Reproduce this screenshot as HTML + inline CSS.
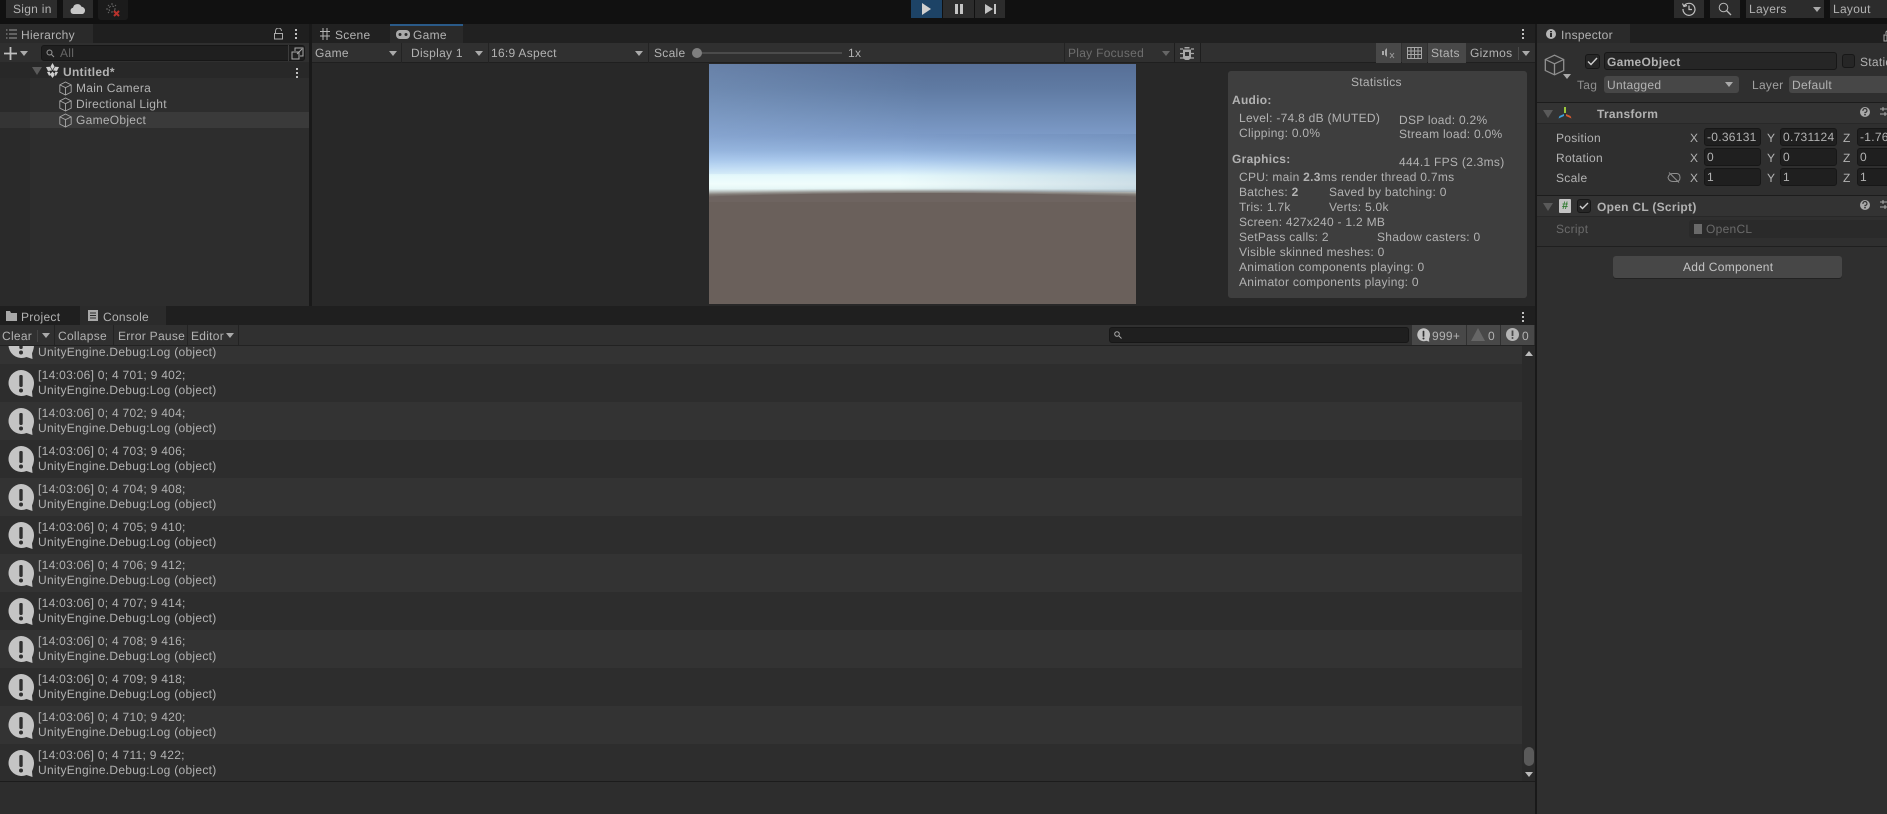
<!DOCTYPE html>
<html><head><meta charset="utf-8"><title>Unity</title>
<style>
html,body{margin:0;padding:0;background:#191919}
body{width:1887px;height:814px;overflow:hidden;position:relative}
div,span.t,svg{position:absolute}
.t{position:absolute;white-space:pre;font:12px/16px "Liberation Sans",sans-serif;letter-spacing:.28px;color:#b2b2b2;text-rendering:geometricPrecision}
.b{font-weight:700}
.d{color:#7d7d7d}
.s{color:#c4c4c4}
b{font-weight:700}
.f{background:#1f1f1f;border:1px solid #171717;box-sizing:border-box;border-radius:3px}
.v{width:1px;background:#232323}
.tb{border-left:4px solid transparent;border-right:4px solid transparent;border-top:5px solid #aaa;width:0;height:0}
.td{border-left:5px solid transparent;border-right:5px solid transparent;border-top:8px solid #5a5a5a;width:0;height:0}
.l{height:1px;background:#1c1c1c}
.r{left:0;width:1522px;height:38px}
.r1{background:#2d2d2d}.r2{background:#333}
</style></head><body>
<svg width="0" height="0" style="position:absolute"><defs>
<symbol id="cube" viewBox="0 0 16 18"><path d="M8 1 15 4.500V13.500L8 17 1 13.500V4.500ZM1 4.500 8 8 15 4.500M8 8V17" fill="none" stroke="#a8a8a8" stroke-width="1.100"/></symbol>
<symbol id="al" viewBox="0 0 26 27"><path d="M13 0A13 13 0 0 1 26 13C26 17 24.500 20 24 21.500L24.500 27 18.500 25A13 13 0 1 1 13 0Z" fill="#c4c4c4"/><rect x="11.300" y="5" width="3.400" height="12" rx="1.200" fill="#2f2f2f"/><circle cx="13" cy="20.500" r="2" fill="#2f2f2f"/></symbol>
</defs></svg>

<!-- top bar -->
<div style="left:0;top:0;width:1887px;height:24px;background:#111"></div>
<div style="left:6px;top:0;width:51px;height:18px;background:#2c2c2c"></div>
<span class="t" style="left:13px;top:1px">Sign in</span>
<div style="left:63px;top:0;width:30px;height:18px;background:#2c2c2c"></div>
<svg style="left:70px;top:4px" width="16" height="10" viewBox="0 0 16 10"><path d="M3.500 10A3.200 3.200 0 0 1 3 3.700 4.500 4.500 0 0 1 11.500 2.800 3.700 3.700 0 0 1 12.500 10Z" fill="#c8c8c8"/></svg>
<div style="left:98px;top:0;width:30px;height:20px;background:#1b1b1b;border-radius:0 0 3px 3px"></div>
<svg style="left:106px;top:3px" width="15" height="14" viewBox="0 0 15 14"><circle cx="6" cy="6" r="3" fill="none" stroke="#666" stroke-dasharray="2 1.500"/><path d="M6 0V2M0 6H2M2 2 3 3M10 2 9 3M2 10 3 9" stroke="#666"/><path d="M8 8 13 13M13 8 8 13" stroke="#b8322c" stroke-width="2"/></svg>

<div style="left:911px;top:0;width:31px;height:18px;background:#1d4366"></div>
<svg style="left:921px;top:3px" width="12" height="12" viewBox="0 0 12 12"><path d="M1 0 10 6 1 12Z" fill="#d0d0d0"/></svg>
<div style="left:943px;top:0;width:31px;height:18px;background:#2c2c2c"></div>
<div style="left:955px;top:4px;width:3px;height:10px;background:#c4c4c4"></div><div style="left:960px;top:4px;width:3px;height:10px;background:#c4c4c4"></div>
<div style="left:975px;top:0;width:30px;height:18px;background:#2c2c2c"></div>
<svg style="left:985px;top:4px" width="12" height="10" viewBox="0 0 12 10"><path d="M0 0 8 5 0 10ZM9 0H11V10H9Z" fill="#c4c4c4"/></svg>

<div style="left:1674px;top:0;width:30px;height:18px;background:#2c2c2c"></div>
<svg style="left:1682px;top:2px" width="14" height="14" viewBox="0 0 14 14"><path d="M2 4A6 6 0 1 1 1 7M7 3.500V7.500H10M0.500 1.500 2 4.500 5 3.500" fill="none" stroke="#c0c0c0" stroke-width="1.200"/></svg>
<div style="left:1710px;top:0;width:30px;height:18px;background:#2c2c2c"></div>
<svg style="left:1718px;top:2px" width="14" height="14" viewBox="0 0 14 14"><circle cx="5.500" cy="5.500" r="4.300" fill="none" stroke="#b8b8b8" stroke-width="1"/><path d="M8.500 8.500 13 13" stroke="#b8b8b8" stroke-width="1.300"/></svg>
<div style="left:1746px;top:0;width:78px;height:18px;background:#2c2c2c"></div>
<span class="t" style="left:1749px;top:1px">Layers</span><div class="tb" style="left:1813px;top:7px"></div>
<div style="left:1830px;top:0;width:57px;height:18px;background:#2c2c2c"></div>
<span class="t" style="left:1833px;top:1px">Layout</span>

<!-- Hierarchy -->
<div style="left:0;top:24px;width:309px;height:282px;background:#2d2d2d"></div>
<div style="left:0;top:24px;width:309px;height:19px;background:#1f1f1f"></div>
<div style="left:0;top:24px;width:93px;height:19px;background:#2a2a2a"></div>
<svg style="left:6px;top:29px" width="11" height="10" viewBox="0 0 11 10"><path d="M3 1H11M3 5H11M3 9H11" stroke="#999"/><path d="M0 1H1.500M0 5H1.500M0 9H1.500" stroke="#999"/></svg>
<span class="t" style="left:21px;top:27px">Hierarchy</span>
<svg style="left:273px;top:28px" width="11" height="12" viewBox="0 0 11 12"><path d="M2.500 5V3A3 3 0 0 1 8.500 3M1.500 5.500H9.500V11H1.500Z" fill="none" stroke="#aaa"/></svg>
<div style="left:295px;top:29px;width:2px;height:2px;background:#c0c0c0"></div><div style="left:295px;top:33px;width:2px;height:2px;background:#c0c0c0"></div><div style="left:295px;top:37px;width:2px;height:2px;background:#c0c0c0"></div>
<div style="left:0;top:43px;width:309px;height:19px;background:#2f2f2f"></div>
<svg style="left:4px;top:47px" width="13" height="13" viewBox="0 0 13 13"><path d="M6.500 0V13M0 6.500H13" stroke="#c0c0c0" stroke-width="1.800"/></svg>
<div class="tb" style="left:20px;top:51px"></div>
<div class="f" style="left:41px;top:45px;width:264px;height:16px"></div>
<svg style="left:46px;top:49px" width="9" height="9" viewBox="0 0 9 9"><circle cx="3.500" cy="3.500" r="2.500" fill="none" stroke="#999"/><path d="M5.500 5.500 8 8" stroke="#999"/></svg>
<span class="t d" style="left:60px;top:45px;color:#666">All</span>
<div style="left:288px;top:45px;width:1px;height:16px;background:#3c3c3c"></div>
<svg style="left:291px;top:47px" width="13" height="13" viewBox="0 0 13 13"><path d="M4 4V1H12V9H9M1 5H8V12H1ZM6 7 11 2" fill="none" stroke="#a8a8a8"/></svg>
<div style="left:0;top:62px;width:309px;height:16px;background:#282828"></div>
<div style="left:0;top:78px;width:30px;height:228px;background:#2a2a2a"></div>
<div style="left:30px;top:112px;width:279px;height:16px;background:#3a3a3a"></div>
<div style="left:0;top:112px;width:30px;height:16px;background:#343434"></div>
<div class="td" style="left:32px;top:67px"></div>
<svg style="left:46px;top:63px" width="13" height="15" viewBox="0 0 13 15"><path d="M6.500 0 8.500 3.500 6.500 7 4.500 3.500ZM0 4 4 3.800 6 7.500 2 8ZM13 4 9 3.800 7 7.500 11 8ZM6.500 8.500 9 11.500 6.500 15 4 11.500ZM1 9 3.500 8.500 5 12 3 12.800ZM12 9 9.500 8.500 8 12 10 12.800Z" fill="#d0d0d0"/></svg>
<span class="t b" style="left:63px;top:64px">Untitled*</span>
<div style="left:296px;top:68px;width:2px;height:2px;background:#c0c0c0"></div><div style="left:296px;top:72px;width:2px;height:2px;background:#c0c0c0"></div><div style="left:296px;top:76px;width:2px;height:2px;background:#c0c0c0"></div>
<svg style="left:59px;top:81px" width="13" height="15"><use href="#cube"/></svg>
<span class="t" style="left:76px;top:80px">Main Camera</span>
<svg style="left:59px;top:97px" width="13" height="15"><use href="#cube"/></svg>
<span class="t" style="left:76px;top:96px">Directional Light</span>
<svg style="left:59px;top:113px" width="13" height="15"><use href="#cube"/></svg>
<span class="t" style="left:76px;top:112px">GameObject</span>

<!-- Game panel -->
<div style="left:312px;top:24px;width:1223px;height:282px;background:#282828"></div>
<div style="left:312px;top:24px;width:1223px;height:19px;background:#212121"></div>
<svg style="left:320px;top:28px" width="10" height="12" viewBox="0 0 10 12"><path d="M3 0V12M7 0V12M0 3.500H10M0 8H10" stroke="#b5b5b5"/></svg>
<span class="t" style="left:335px;top:27px">Scene</span>
<div style="left:390px;top:24px;width:73px;height:19px;background:#2a2a2a"></div>
<div style="left:390px;top:24px;width:73px;height:2px;background:#2a5a88"></div>
<svg style="left:396px;top:30px" width="14" height="9" viewBox="0 0 14 9"><rect x="0" y="0" width="14" height="9" rx="4" fill="#aaa"/><circle cx="4" cy="4.500" r="1.500" fill="#2a2a2a"/><circle cx="10" cy="4.500" r="1.500" fill="#2a2a2a"/></svg>
<span class="t" style="left:413px;top:27px">Game</span>
<div style="left:1522px;top:29px;width:2px;height:2px;background:#c0c0c0"></div><div style="left:1522px;top:33px;width:2px;height:2px;background:#c0c0c0"></div><div style="left:1522px;top:37px;width:2px;height:2px;background:#c0c0c0"></div>
<div style="left:312px;top:43px;width:1223px;height:20px;background:#303030"></div>
<div style="left:312px;top:62px;width:1223px;height:1px;background:#1f1f1f"></div>
<span class="t" style="left:315px;top:45px">Game</span><div class="tb" style="left:389px;top:51px"></div><div class="v" style="left:401px;top:43px;height:20px"></div>
<span class="t" style="left:411px;top:45px">Display 1</span><div class="tb" style="left:475px;top:51px"></div><div class="v" style="left:488px;top:43px;height:20px"></div>
<span class="t" style="left:491px;top:45px">16:9 Aspect</span><div class="tb" style="left:635px;top:51px"></div><div class="v" style="left:648px;top:43px;height:20px"></div>
<span class="t" style="left:654px;top:45px">Scale</span>
<div style="left:697px;top:52px;width:145px;height:2px;background:#4b4b4b"></div>
<div style="left:692px;top:48px;width:10px;height:10px;border-radius:50%;background:#7f7f7f"></div>
<span class="t" style="left:848px;top:45px">1x</span>
<div class="v" style="left:1064px;top:43px;height:20px"></div>
<span class="t d" style="left:1068px;top:45px;color:#6e6e6e">Play Focused</span>
<div class="tb" style="left:1162px;top:51px;border-top-color:#666"></div>
<div class="v" style="left:1174px;top:43px;height:20px;background:#1e1e1e"></div>
<svg style="left:1180px;top:46px" width="14" height="14" viewBox="0 0 14 14"><path d="M4.500 2.500H9.500V1H4.500ZM3 3.500H11V12.500L8.500 14H5.500L3 12.500Z" fill="#a8a8a8"/><rect x="5" y="6" width="4" height="4" fill="#303030"/><path d="M0 3H3M14 3H11M0 7.500H3M14 7.500H11M0 12H3M14 12H11" stroke="#a8a8a8" stroke-width="1.300"/></svg>
<div class="v" style="left:1200px;top:43px;height:20px;background:#1e1e1e"></div>
<div style="left:1376px;top:43px;width:25px;height:20px;background:#484848"></div>
<svg style="left:1382px;top:47px" width="13" height="12" viewBox="0 0 13 12"><path d="M0 4H2V8H0ZM3 3 5 1V10L3 8Z" fill="#aaa"/><path d="M8 6 12 11M12 6 8 11" stroke="#999"/></svg>
<div style="left:1402px;top:43px;width:25px;height:20px;background:#3a3a3a"></div>
<svg style="left:1407px;top:47px" width="15" height="12" viewBox="0 0 15 12"><path d="M.500.500H14.500V11.500H.500ZM.500 4H14.500M.500 7.500H14.500M4 .500V11.500M7.500 .500V11.500M11 .500V11.500" fill="none" stroke="#a8a8a8"/></svg>
<div style="left:1428px;top:43px;width:38px;height:20px;background:#484848"></div>
<span class="t" style="left:1431px;top:45px">Stats</span>
<span class="t" style="left:1470px;top:45px">Gizmos</span>
<div class="v" style="left:1518px;top:47px;height:13px;background:#4a4a4a"></div>
<div class="tb" style="left:1522px;top:51px"></div>

<div style="left:709px;top:64px;width:427px;height:240px;overflow:hidden;background:linear-gradient(180deg,#576f97 0,#5f7aa2 10%,#6d8ab4 20%,#7d9bc8 30%,#90b0da 36%,#a9c8ec 40%,#c8e2f7 43.500%,#e4f8fb 46.500%,#f0fdfc 50%,#e6f7f7 52%,#8f8b85 54.500%,#6e6460 56.500%)">
<div style="left:-40px;top:129px;width:507px;height:60px;background:#6e6460;border-radius:50%/8px 8px 0 0;box-shadow:0 -2px 3px rgba(110,100,96,.75)"></div>
<div style="left:0;top:138px;width:427px;height:102px;background:#6a605b"></div>
<div style="left:0;top:0;width:220px;height:110px;background:linear-gradient(90deg,rgba(170,200,235,.2),rgba(170,200,235,0))"></div>
<div style="left:190px;top:70px;width:237px;height:58px;background:linear-gradient(90deg,rgba(90,120,160,0),rgba(90,120,160,.22))"></div>
</div>

<!-- Stats -->
<div style="left:1228px;top:71px;width:299px;height:227px;background:#3e3e3e;border-radius:3px"></div>
<span class="t" style="left:1351px;top:74px">Statistics</span>
<span class="t b" style="left:1232px;top:92px">Audio:</span>
<span class="t" style="left:1239px;top:110px">Level: -74.8 dB (MUTED)</span>
<span class="t" style="left:1239px;top:125px">Clipping: 0.0%</span>
<span class="t" style="left:1399px;top:112px">DSP load: 0.2%</span>
<span class="t" style="left:1399px;top:126px">Stream load: 0.0%</span>
<span class="t b" style="left:1232px;top:151px">Graphics:</span>
<span class="t" style="left:1399px;top:154px">444.1 FPS (2.3ms)</span>
<span class="t" style="left:1239px;top:169px">CPU: main <b>2.3</b>ms</span>
<span class="t" style="left:1341px;top:169px">render thread 0.7ms</span>
<span class="t" style="left:1239px;top:184px">Batches: <b>2</b></span>
<span class="t" style="left:1329px;top:184px">Saved by batching: 0</span>
<span class="t" style="left:1239px;top:199px">Tris: 1.7k</span>
<span class="t" style="left:1329px;top:199px">Verts: 5.0k</span>
<span class="t" style="left:1239px;top:214px">Screen: 427x240 - 1.2 MB</span>
<span class="t" style="left:1239px;top:229px">SetPass calls: 2</span>
<span class="t" style="left:1377px;top:229px">Shadow casters: 0</span>
<span class="t" style="left:1239px;top:244px">Visible skinned meshes: 0</span>
<span class="t" style="left:1239px;top:259px">Animation components playing: 0</span>
<span class="t" style="left:1239px;top:274px">Animator components playing: 0</span>

<!-- Console -->
<div style="left:0;top:306px;width:1535px;height:508px;background:#2d2d2d"></div>
<div style="left:0;top:306px;width:1535px;height:19px;background:#1f1f1f"></div>
<svg style="left:6px;top:311px" width="11" height="10" viewBox="0 0 11 10"><path d="M0 0H4L5 2H11V10H0Z" fill="#a8a8a8"/></svg>
<span class="t" style="left:21px;top:309px">Project</span>
<div style="left:80px;top:306px;width:86px;height:19px;background:#2b2b2b"></div>
<svg style="left:88px;top:310px" width="10" height="11" viewBox="0 0 10 11"><path d="M0 0H10V11H0Z" fill="#a8a8a8"/><path d="M2 3H8M2 5.500H8M2 8H8" stroke="#2b2b2b"/></svg>
<span class="t" style="left:103px;top:309px">Console</span>
<div style="left:1522px;top:312px;width:2px;height:2px;background:#c0c0c0"></div><div style="left:1522px;top:316px;width:2px;height:2px;background:#c0c0c0"></div><div style="left:1522px;top:320px;width:2px;height:2px;background:#c0c0c0"></div>
<div style="left:0;top:325px;width:1535px;height:20px;background:#303030"></div>
<div style="left:0;top:345px;width:1535px;height:1px;background:#222"></div>
<span class="t" style="left:2px;top:328px">Clear</span><div class="v" style="left:37px;top:330px;height:12px;background:#444"></div><div class="tb" style="left:42px;top:333px"></div><div class="v" style="left:54px;top:325px;height:20px"></div>
<span class="t" style="left:58px;top:328px">Collapse</span><div class="v" style="left:113px;top:325px;height:20px"></div>
<span class="t" style="left:118px;top:328px">Error Pause</span><div class="v" style="left:187px;top:325px;height:20px"></div>
<span class="t" style="left:191px;top:328px">Editor</span><div class="tb" style="left:226px;top:333px"></div><div class="v" style="left:238px;top:325px;height:20px"></div>
<div class="f" style="left:1109px;top:327px;width:300px;height:16px"></div>
<svg style="left:1114px;top:331px" width="8" height="8" viewBox="0 0 8 8"><circle cx="3" cy="3" r="2.300" fill="none" stroke="#aaa"/><path d="M5 5 7.500 7.500" stroke="#aaa"/></svg>
<div style="left:1412px;top:325px;width:54px;height:20px;background:#484848"></div>
<svg style="left:1417px;top:328px" width="13" height="14"><use href="#al"/></svg>
<span class="t" style="left:1432px;top:328px">999+</span>
<div style="left:1467px;top:325px;width:33px;height:20px;background:#484848"></div>
<svg style="left:1471px;top:328px" width="14" height="13" viewBox="0 0 14 13"><path d="M7 0 14 13H0Z" fill="#666"/></svg>
<span class="t" style="left:1488px;top:328px">0</span>
<div style="left:1501px;top:325px;width:33px;height:20px;background:#484848"></div>
<svg style="left:1506px;top:328px" width="13" height="13" viewBox="0 0 13 13"><circle cx="6.500" cy="6.500" r="6.500" fill="#b5b5b5"/><rect x="5.600" y="2.500" width="1.800" height="5.500" fill="#484848"/><circle cx="6.500" cy="10" r="1" fill="#484848"/></svg>
<span class="t" style="left:1522px;top:328px">0</span>

<div style="left:0;top:346px;width:1535px;height:435px;overflow:hidden">
<div class="r r2" style="top:-20px"></div>
<svg style="left:8px;top:-14px" width="26" height="27"><use href="#al"/></svg>
<span class="t" style="left:38px;top:-2px">UnityEngine.Debug:Log (object)</span>

<div class="r r1" style="top:18px"></div>
<svg style="left:8px;top:24px" width="26" height="27"><use href="#al"/></svg>
<span class="t" style="left:38px;top:21px">[14:03:06] 0; 4 701; 9 402;</span>
<span class="t" style="left:38px;top:36px">UnityEngine.Debug:Log (object)</span>

<div class="r r2" style="top:56px"></div>
<svg style="left:8px;top:62px" width="26" height="27"><use href="#al"/></svg>
<span class="t" style="left:38px;top:59px">[14:03:06] 0; 4 702; 9 404;</span>
<span class="t" style="left:38px;top:74px">UnityEngine.Debug:Log (object)</span>

<div class="r r1" style="top:94px"></div>
<svg style="left:8px;top:100px" width="26" height="27"><use href="#al"/></svg>
<span class="t" style="left:38px;top:97px">[14:03:06] 0; 4 703; 9 406;</span>
<span class="t" style="left:38px;top:112px">UnityEngine.Debug:Log (object)</span>

<div class="r r2" style="top:132px"></div>
<svg style="left:8px;top:138px" width="26" height="27"><use href="#al"/></svg>
<span class="t" style="left:38px;top:135px">[14:03:06] 0; 4 704; 9 408;</span>
<span class="t" style="left:38px;top:150px">UnityEngine.Debug:Log (object)</span>

<div class="r r1" style="top:170px"></div>
<svg style="left:8px;top:176px" width="26" height="27"><use href="#al"/></svg>
<span class="t" style="left:38px;top:173px">[14:03:06] 0; 4 705; 9 410;</span>
<span class="t" style="left:38px;top:188px">UnityEngine.Debug:Log (object)</span>

<div class="r r2" style="top:208px"></div>
<svg style="left:8px;top:214px" width="26" height="27"><use href="#al"/></svg>
<span class="t" style="left:38px;top:211px">[14:03:06] 0; 4 706; 9 412;</span>
<span class="t" style="left:38px;top:226px">UnityEngine.Debug:Log (object)</span>

<div class="r r1" style="top:246px"></div>
<svg style="left:8px;top:252px" width="26" height="27"><use href="#al"/></svg>
<span class="t" style="left:38px;top:249px">[14:03:06] 0; 4 707; 9 414;</span>
<span class="t" style="left:38px;top:264px">UnityEngine.Debug:Log (object)</span>

<div class="r r2" style="top:284px"></div>
<svg style="left:8px;top:290px" width="26" height="27"><use href="#al"/></svg>
<span class="t" style="left:38px;top:287px">[14:03:06] 0; 4 708; 9 416;</span>
<span class="t" style="left:38px;top:302px">UnityEngine.Debug:Log (object)</span>

<div class="r r1" style="top:322px"></div>
<svg style="left:8px;top:328px" width="26" height="27"><use href="#al"/></svg>
<span class="t" style="left:38px;top:325px">[14:03:06] 0; 4 709; 9 418;</span>
<span class="t" style="left:38px;top:340px">UnityEngine.Debug:Log (object)</span>

<div class="r r2" style="top:360px"></div>
<svg style="left:8px;top:366px" width="26" height="27"><use href="#al"/></svg>
<span class="t" style="left:38px;top:363px">[14:03:06] 0; 4 710; 9 420;</span>
<span class="t" style="left:38px;top:378px">UnityEngine.Debug:Log (object)</span>

<div class="r r1" style="top:398px"></div>
<svg style="left:8px;top:404px" width="26" height="27"><use href="#al"/></svg>
<span class="t" style="left:38px;top:401px">[14:03:06] 0; 4 711; 9 422;</span>
<span class="t" style="left:38px;top:416px">UnityEngine.Debug:Log (object)</span>
</div>
<div class="l" style="left:0;top:781px;width:1535px"></div>
<div style="left:1522px;top:346px;width:13px;height:435px;background:#2a2a2a"></div>
<div style="left:1525px;top:351px;border-left:4px solid transparent;border-right:4px solid transparent;border-bottom:5px solid #bbb;width:0;height:0"></div>
<div style="left:1524px;top:747px;width:10px;height:19px;border-radius:5px;background:#5a5a5a"></div>
<div style="left:1525px;top:772px;border-left:4px solid transparent;border-right:4px solid transparent;border-top:5px solid #bbb;width:0;height:0"></div>

<!-- Inspector -->
<div style="left:1537px;top:24px;width:350px;height:790px;background:#2f2f2f"></div>
<div style="left:1537px;top:24px;width:350px;height:19px;background:#1f1f1f"></div>
<div style="left:1537px;top:24px;width:93px;height:19px;background:#2a2a2a"></div>
<svg style="left:1546px;top:29px" width="10" height="10" viewBox="0 0 10 10"><circle cx="5" cy="5" r="5" fill="#b5b5b5"/><rect x="4" y="4" width="2" height="4" fill="#2a2a2a"/><rect x="4" y="2" width="2" height="1.300" fill="#2a2a2a"/></svg>
<span class="t" style="left:1561px;top:27px">Inspector</span>
<svg style="left:1883px;top:30px" width="4" height="12" viewBox="0 0 4 12"><path d="M3 4V2A2 2 0 0 1 4 1M1 5H4V11H1Z" fill="none" stroke="#aaa"/></svg>
<svg style="left:1544px;top:54px" width="21" height="22" viewBox="0 0 16 18" preserveAspectRatio="none"><path d="M8 1 15 4.500V13.500L8 17 1 13.500V4.500ZM1 4.500 8 8 15 4.500M8 8V17" fill="none" stroke="#8f8f8f"/></svg>
<div class="tb" style="left:1563px;top:74px"></div>
<div class="f" style="left:1585px;top:54px;width:15px;height:15px;background:#262626"></div>
<svg style="left:1587px;top:57px" width="11" height="9" viewBox="0 0 11 9"><path d="M1 4.500 4 7.500 10 1" fill="none" stroke="#d0d0d0" stroke-width="1.400"/></svg>
<div class="f" style="left:1604px;top:52px;width:233px;height:18px;background:#262626"></div>
<span class="t b" style="left:1607px;top:54px">GameObject</span>
<div class="f" style="left:1842px;top:54px;width:13px;height:14px;background:#262626"></div>
<span class="t" style="left:1860px;top:54px">Static</span>
<span class="t d" style="left:1577px;top:77px;color:#909090">Tag</span>
<div style="left:1604px;top:76px;width:135px;height:17px;background:#474747;border-radius:3px"></div>
<span class="t" style="left:1607px;top:77px">Untagged</span><div class="tb" style="left:1725px;top:82px"></div>
<span class="t" style="left:1752px;top:77px;color:#a0a0a0">Layer</span>
<div style="left:1789px;top:76px;width:110px;height:17px;background:#474747;border-radius:3px"></div>
<span class="t" style="left:1792px;top:77px">Default</span>

<div class="l" style="left:1537px;top:102px;width:350px;background:#1c1c1c"></div>
<div style="left:1537px;top:103px;width:350px;height:20px;background:#333"></div>
<div class="l" style="left:1537px;top:123px;width:350px;background:#282828"></div>
<div class="td" style="left:1543px;top:110px"></div>
<svg style="left:1558px;top:107px" width="14" height="14" viewBox="0 0 14 14"><path d="M6 0H8V6H6Z" fill="#9cc83c"/><path d="M6 7 1.500 9 0.500 11.500 6 9Z" fill="#3fa0d8"/><path d="M8 7 12.500 9 13.500 11.500 8 9Z" fill="#d85a30"/></svg>
<span class="t b" style="left:1597px;top:106px">Transform</span>
<svg style="left:1860px;top:107px" width="10" height="10" viewBox="0 0 10 10"><circle cx="5" cy="5" r="5" fill="#aaa"/><rect x="4.200" y="6.800" width="1.600" height="1.600" fill="#333"/><path d="M3 4A2 2 0 1 1 5 5.500V6" fill="none" stroke="#333" stroke-width="1.200"/></svg>
<svg style="left:1880px;top:107px" width="7" height="10" viewBox="0 0 7 10"><path d="M0 2H7M0 7H7M3 0V4M5 5V9" stroke="#aaa"/></svg>
<span class="t" style="left:1556px;top:130px">Position</span>
<span class="t" style="left:1556px;top:150px">Rotation</span>
<span class="t" style="left:1556px;top:170px">Scale</span>
<svg style="left:1667px;top:172px" width="14" height="11" viewBox="0 0 14 11"><path d="M1 5.500Q2 1.500 6 1.500H10Q13 2 13 5.500 13 9 10 9.500H6Q2 9.500 1 5.500ZM2 .5 12 10.500" fill="none" stroke="#8f8f8f"/></svg>

<span class="t" style="left:1690px;top:130px">X</span><div class="f" style="left:1704px;top:128px;width:57px;height:18px"></div><span class="t" style="left:1707px;top:129px">-0.36131</span>
<span class="t" style="left:1767px;top:130px">Y</span><div class="f" style="left:1780px;top:128px;width:57px;height:18px"></div><span class="t" style="left:1783px;top:129px">0.731124</span>
<span class="t" style="left:1843px;top:130px">Z</span><div class="f" style="left:1857px;top:128px;width:40px;height:18px"></div><span class="t" style="left:1860px;top:129px">-1.76</span>
<span class="t" style="left:1690px;top:150px">X</span><div class="f" style="left:1704px;top:148px;width:57px;height:18px"></div><span class="t" style="left:1707px;top:149px">0</span>
<span class="t" style="left:1767px;top:150px">Y</span><div class="f" style="left:1780px;top:148px;width:57px;height:18px"></div><span class="t" style="left:1783px;top:149px">0</span>
<span class="t" style="left:1843px;top:150px">Z</span><div class="f" style="left:1857px;top:148px;width:40px;height:18px"></div><span class="t" style="left:1860px;top:149px">0</span>
<span class="t" style="left:1690px;top:170px">X</span><div class="f" style="left:1704px;top:168px;width:57px;height:18px"></div><span class="t" style="left:1707px;top:169px">1</span>
<span class="t" style="left:1767px;top:170px">Y</span><div class="f" style="left:1780px;top:168px;width:57px;height:18px"></div><span class="t" style="left:1783px;top:169px">1</span>
<span class="t" style="left:1843px;top:170px">Z</span><div class="f" style="left:1857px;top:168px;width:40px;height:18px"></div><span class="t" style="left:1860px;top:169px">1</span>

<div class="l" style="left:1537px;top:195px;width:350px"></div>
<div style="left:1537px;top:196px;width:350px;height:20px;background:#333"></div>
<div class="l" style="left:1537px;top:216px;width:350px;background:#282828"></div>
<div class="td" style="left:1543px;top:203px"></div>
<div style="left:1559px;top:199px;width:12px;height:14px;background:#c4c4c4;border-radius:1px"></div>
<span class="t" style="left:1562px;top:198px;color:#2f7a2f;font-size:11px;font-weight:700;letter-spacing:0">#</span>
<div class="f" style="left:1577px;top:199px;width:14px;height:14px;background:#262626"></div>
<svg style="left:1579px;top:202px" width="10" height="8" viewBox="0 0 10 8"><path d="M1 4 3.500 6.500 9 1" fill="none" stroke="#d0d0d0" stroke-width="1.400"/></svg>
<span class="t b" style="left:1597px;top:199px">Open CL (Script)</span>
<svg style="left:1860px;top:200px" width="10" height="10" viewBox="0 0 10 10"><circle cx="5" cy="5" r="5" fill="#aaa"/><rect x="4.200" y="6.800" width="1.600" height="1.600" fill="#333"/><path d="M3 4A2 2 0 1 1 5 5.500V6" fill="none" stroke="#333" stroke-width="1.200"/></svg>
<svg style="left:1880px;top:200px" width="7" height="10" viewBox="0 0 7 10"><path d="M0 2H7M0 7H7M3 0V4M5 5V9" stroke="#aaa"/></svg>
<span class="t d" style="left:1556px;top:221px;color:#6a6a6a">Script</span>
<div style="left:1689px;top:220px;width:210px;height:18px;background:#2a2a2a;border-radius:3px"></div>
<div style="left:1694px;top:224px;width:8px;height:10px;background:#6a6a6a"></div>
<span class="t d" style="left:1706px;top:221px;color:#6a6a6a">OpenCL</span>
<div class="l" style="left:1537px;top:246px;width:350px;background:#1f1f1f"></div>
<div style="left:1613px;top:256px;width:229px;height:22px;background:#474747;border-radius:3px;box-shadow:0 1px 0 #222"></div>
<span class="t s" style="left:1683px;top:259px">Add Component</span>
</body></html>
